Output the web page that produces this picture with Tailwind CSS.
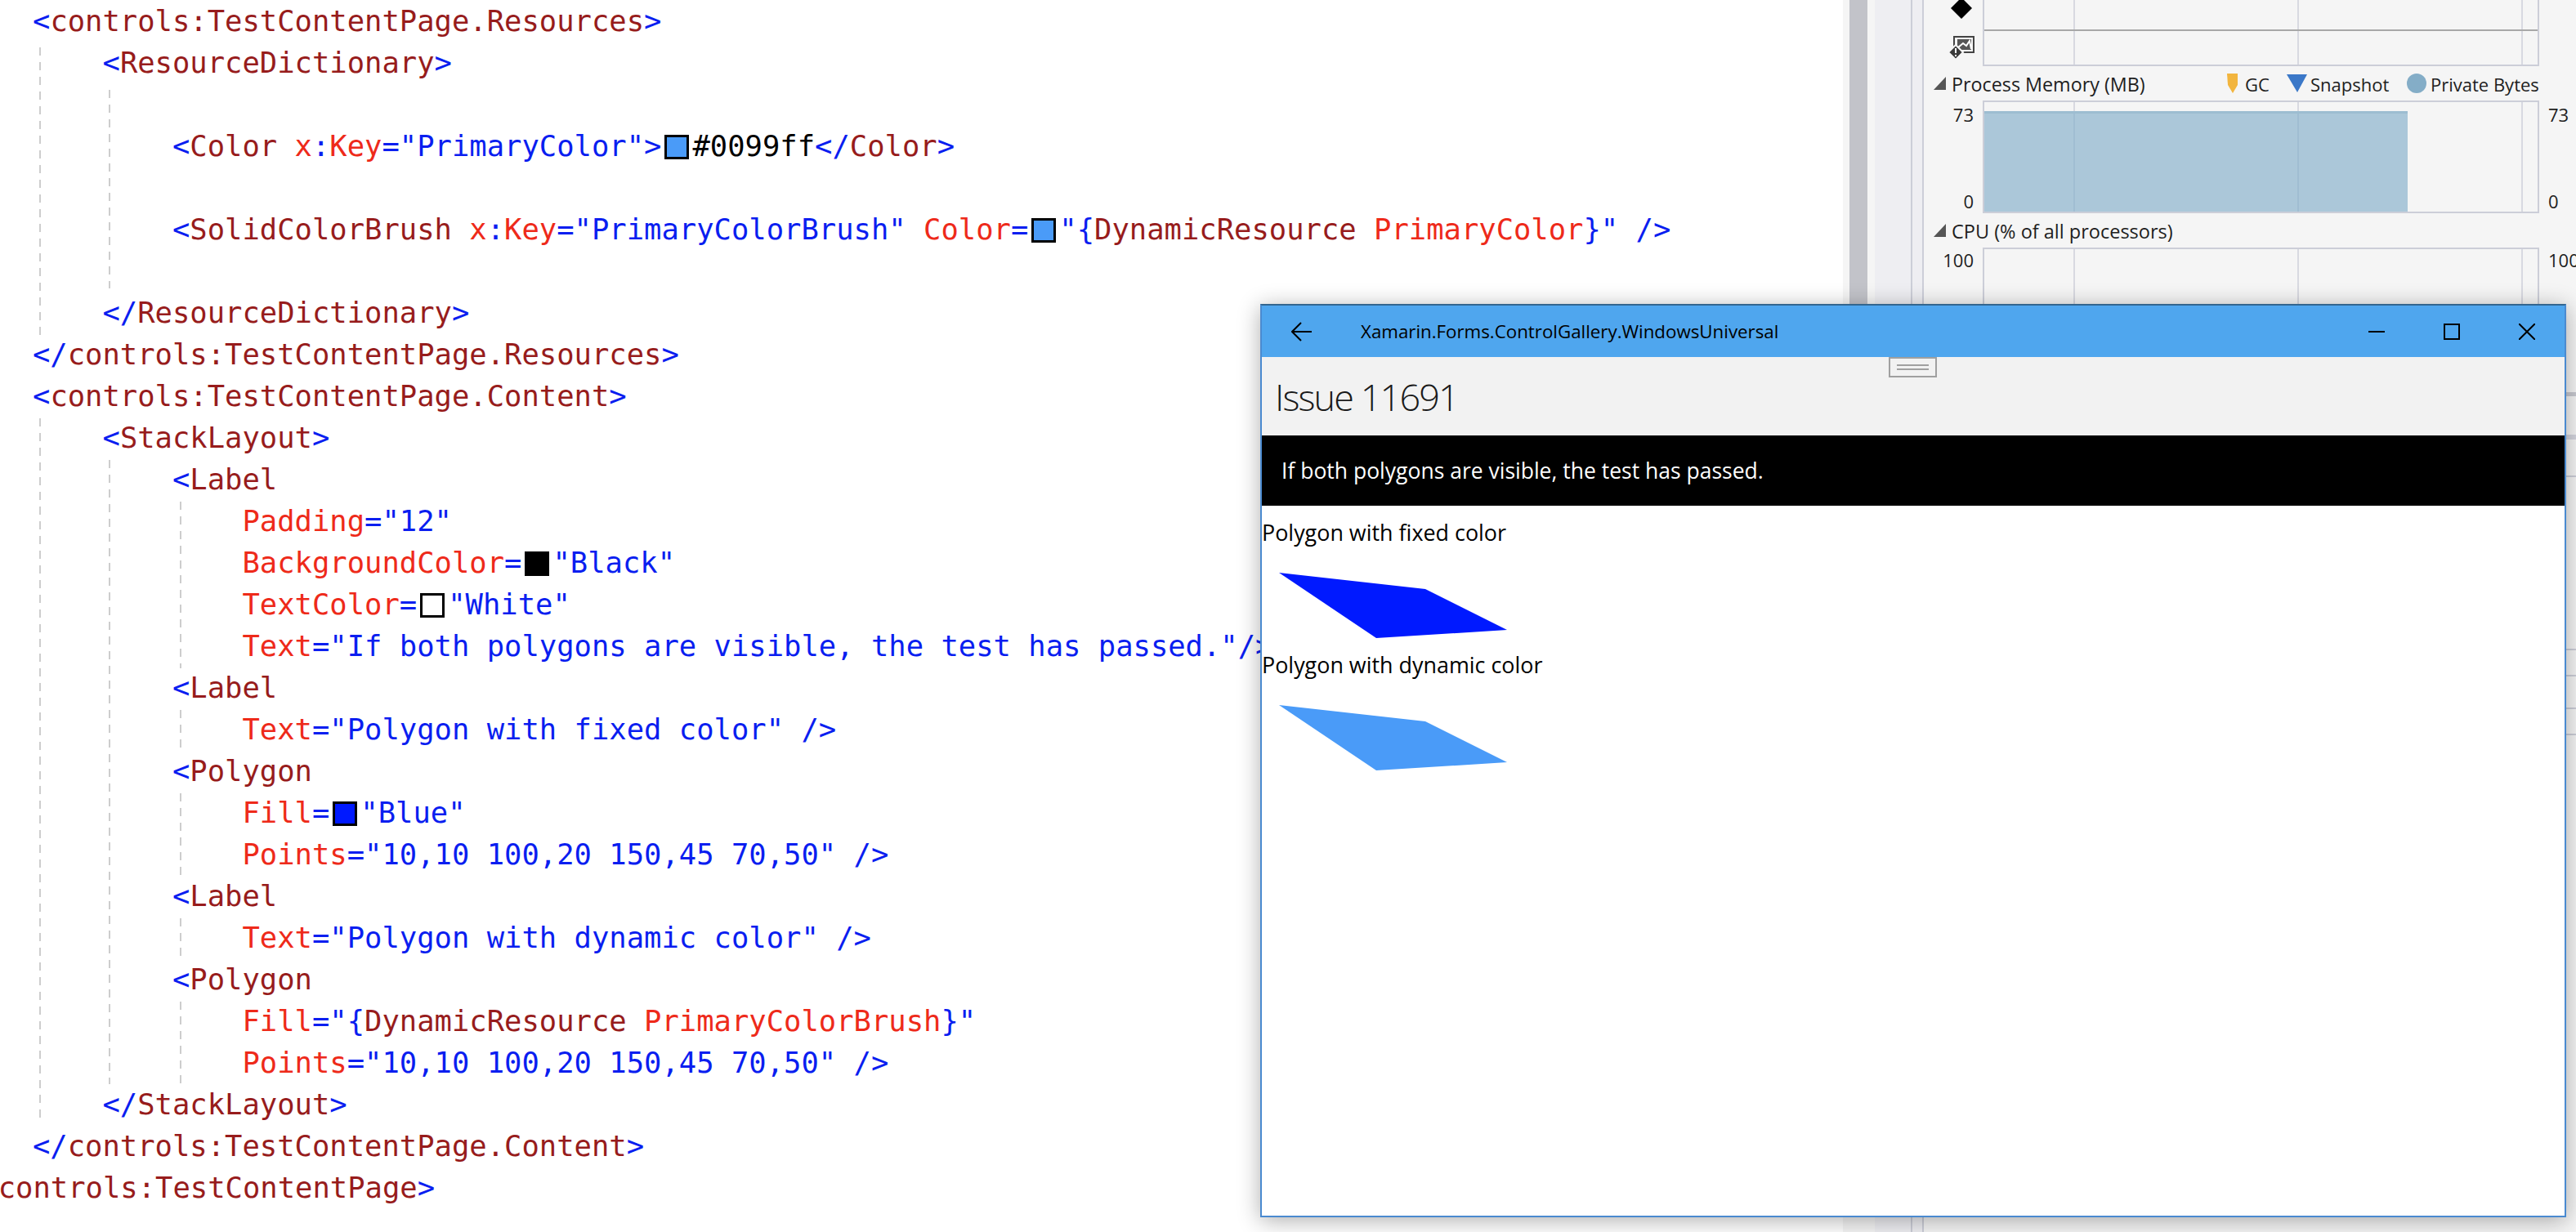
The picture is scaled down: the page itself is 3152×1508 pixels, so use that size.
<!DOCTYPE html>
<html>
<head>
<meta charset="utf-8">
<script src="https://cdn.jsdelivr.net/npm/@tailwindcss/browser@4"></script>
</head>
<body class="bg-white">
<div class="relative flex w-[3152px] h-[1508px] overflow-hidden bg-white font-['Open_Sans',sans-serif]">

  <!-- code editor -->
  <div class="relative w-[2255px] shrink-0 overflow-hidden pl-[40px] pt-0 font-['DejaVu_Sans_Mono',monospace] text-[35.5px] leading-[51px] [&>div]:whitespace-pre text-[#971c1c]">
    <div class="h-[51px]"><span class="text-[#0a1ef0]">&lt;</span>controls:TestContentPage.Resources<span class="text-[#0a1ef0]">&gt;</span></div>
    <div class="h-[51px]">    <span class="text-[#0a1ef0]">&lt;</span>ResourceDictionary<span class="text-[#0a1ef0]">&gt;</span></div>
    <div class="h-[51px]"></div>
    <div class="h-[51px]">        <span class="text-[#0a1ef0]">&lt;</span>Color <span class="text-[#ee2a1a]">x</span><span class="text-[#0a1ef0]">:</span><span class="text-[#ee2a1a]">Key</span><span class="text-[#0a1ef0]">="PrimaryColor"&gt;</span><span class="inline-block align-[-4px] w-[30px] h-[30px] ml-[4px] mr-[4px] border-[3px] border-black bg-[#4a9bf8]"></span><span class="text-black">#0099ff</span><span class="text-[#0a1ef0]">&lt;/</span>Color<span class="text-[#0a1ef0]">&gt;</span></div>
    <div class="h-[51px]"></div>
    <div class="h-[51px]">        <span class="text-[#0a1ef0]">&lt;</span>SolidColorBrush <span class="text-[#ee2a1a]">x</span><span class="text-[#0a1ef0]">:</span><span class="text-[#ee2a1a]">Key</span><span class="text-[#0a1ef0]">="PrimaryColorBrush"</span> <span class="text-[#ee2a1a]">Color</span><span class="text-[#0a1ef0]">=</span><span class="inline-block align-[-4px] w-[30px] h-[30px] ml-[4px] mr-[4px] border-[3px] border-black bg-[#4a9bf8]"></span><span class="text-[#0a1ef0]">"{</span>DynamicResource <span class="text-[#ee2a1a]">PrimaryColor</span><span class="text-[#0a1ef0]">}" /&gt;</span></div>
    <div class="h-[51px]"></div>
    <div class="h-[51px]">    <span class="text-[#0a1ef0]">&lt;/</span>ResourceDictionary<span class="text-[#0a1ef0]">&gt;</span></div>
    <div class="h-[51px]"><span class="text-[#0a1ef0]">&lt;/</span>controls:TestContentPage.Resources<span class="text-[#0a1ef0]">&gt;</span></div>
    <div class="h-[51px]"><span class="text-[#0a1ef0]">&lt;</span>controls:TestContentPage.Content<span class="text-[#0a1ef0]">&gt;</span></div>
    <div class="h-[51px]">    <span class="text-[#0a1ef0]">&lt;</span>StackLayout<span class="text-[#0a1ef0]">&gt;</span></div>
    <div class="h-[51px]">        <span class="text-[#0a1ef0]">&lt;</span>Label</div>
    <div class="h-[51px]">            <span class="text-[#ee2a1a]">Padding</span><span class="text-[#0a1ef0]">="12"</span></div>
    <div class="h-[51px]">            <span class="text-[#ee2a1a]">BackgroundColor</span><span class="text-[#0a1ef0]">=</span><span class="inline-block align-[-4px] w-[30px] h-[30px] ml-[4px] mr-[4px] border-[3px] border-black bg-black"></span><span class="text-[#0a1ef0]">"Black"</span></div>
    <div class="h-[51px]">            <span class="text-[#ee2a1a]">TextColor</span><span class="text-[#0a1ef0]">=</span><span class="inline-block align-[-4px] w-[30px] h-[30px] ml-[4px] mr-[4px] border-[3px] border-black bg-white"></span><span class="text-[#0a1ef0]">"White"</span></div>
    <div class="h-[51px]">            <span class="text-[#ee2a1a]">Text</span><span class="text-[#0a1ef0]">="If both polygons are visible, the test has passed."/&gt;</span></div>
    <div class="h-[51px]">        <span class="text-[#0a1ef0]">&lt;</span>Label</div>
    <div class="h-[51px]">            <span class="text-[#ee2a1a]">Text</span><span class="text-[#0a1ef0]">="Polygon with fixed color" /&gt;</span></div>
    <div class="h-[51px]">        <span class="text-[#0a1ef0]">&lt;</span>Polygon</div>
    <div class="h-[51px]">            <span class="text-[#ee2a1a]">Fill</span><span class="text-[#0a1ef0]">=</span><span class="inline-block align-[-4px] w-[30px] h-[30px] ml-[4px] mr-[4px] border-[3px] border-black bg-[#0019ff]"></span><span class="text-[#0a1ef0]">"Blue"</span></div>
    <div class="h-[51px]">            <span class="text-[#ee2a1a]">Points</span><span class="text-[#0a1ef0]">="10,10 100,20 150,45 70,50" /&gt;</span></div>
    <div class="h-[51px]">        <span class="text-[#0a1ef0]">&lt;</span>Label</div>
    <div class="h-[51px]">            <span class="text-[#ee2a1a]">Text</span><span class="text-[#0a1ef0]">="Polygon with dynamic color" /&gt;</span></div>
    <div class="h-[51px]">        <span class="text-[#0a1ef0]">&lt;</span>Polygon</div>
    <div class="h-[51px]">            <span class="text-[#ee2a1a]">Fill</span><span class="text-[#0a1ef0]">="{</span>DynamicResource <span class="text-[#ee2a1a]">PrimaryColorBrush</span><span class="text-[#0a1ef0]">}"</span></div>
    <div class="h-[51px]">            <span class="text-[#ee2a1a]">Points</span><span class="text-[#0a1ef0]">="10,10 100,20 150,45 70,50" /&gt;</span></div>
    <div class="h-[51px]">    <span class="text-[#0a1ef0]">&lt;/</span>StackLayout<span class="text-[#0a1ef0]">&gt;</span></div>
    <div class="h-[51px]"><span class="text-[#0a1ef0]">&lt;/</span>controls:TestContentPage.Content<span class="text-[#0a1ef0]">&gt;</span></div>
    <div class="h-[51px] -ml-[85px]"><span class="text-[#0a1ef0]">&lt;/</span>controls:TestContentPage<span class="text-[#0a1ef0]">&gt;</span></div>

    <!-- indent guides -->
    <div class="absolute left-[48px] top-[58px] w-[2px] h-[352px] bg-[repeating-linear-gradient(to_bottom,#cdcdcd_0_10px,transparent_10px_18px)]"></div>
    <div class="absolute left-[48px] top-[512px] w-[2px] h-[861px] bg-[repeating-linear-gradient(to_bottom,#cdcdcd_0_10px,transparent_10px_18px)]"></div>
    <div class="absolute left-[133px] top-[110px] w-[2px] h-[243px] bg-[repeating-linear-gradient(to_bottom,#cdcdcd_0_10px,transparent_10px_18px)]"></div>
    <div class="absolute left-[133px] top-[563px] w-[2px] h-[764px] bg-[repeating-linear-gradient(to_bottom,#cdcdcd_0_10px,transparent_10px_18px)]"></div>
    <div class="absolute left-[220px] top-[614px] w-[2px] h-[204px] bg-[repeating-linear-gradient(to_bottom,#cdcdcd_0_10px,transparent_10px_18px)]"></div>
    <div class="absolute left-[220px] top-[869px] w-[2px] h-[51px] bg-[repeating-linear-gradient(to_bottom,#cdcdcd_0_10px,transparent_10px_18px)]"></div>
    <div class="absolute left-[220px] top-[971px] w-[2px] h-[102px] bg-[repeating-linear-gradient(to_bottom,#cdcdcd_0_10px,transparent_10px_18px)]"></div>
    <div class="absolute left-[220px] top-[1124px] w-[2px] h-[51px] bg-[repeating-linear-gradient(to_bottom,#cdcdcd_0_10px,transparent_10px_18px)]"></div>
    <div class="absolute left-[220px] top-[1226px] w-[2px] h-[102px] bg-[repeating-linear-gradient(to_bottom,#cdcdcd_0_10px,transparent_10px_18px)]"></div>
  </div>

  <!-- scrollbar -->
  <div class="w-[39px] shrink-0 bg-[#f5f5f5] px-[8px]">
    <div class="w-[22px] h-[1200px] bg-[#c2c3c9]"></div>
  </div>

  <!-- strip between scrollbar and diagnostics -->
  <div class="w-[60px] shrink-0 flex bg-[#eeeef2]">
    <div class="ml-[44px] w-[2px] bg-[#ccced8]"></div>
    <div class="ml-[12px] w-[2px] bg-[#ccced8]"></div>
  </div>

  <!-- diagnostics panel -->
  <div class="relative flex-1 bg-[#f5f5f5] text-[22px] leading-[30px] text-[#1e1e1e] whitespace-nowrap">
    <div class="flex h-[81px]">
      <div class="relative w-[72px] shrink-0">
        <svg class="absolute left-[33px] top-0" width="26" height="24" viewBox="0 0 26 24"><path d="M13 -3 26 10 13 23 0 10Z" fill="#000"/></svg>
        <svg class="absolute left-[28px] top-[42px]" width="36" height="34" viewBox="0 0 36 34">
          <path d="M9 3H33V22H9Z" fill="#f5f5f5" stroke="#444" stroke-width="2"/>
          <path d="M13 6H30V19H13Z" fill="#555"/>
          <path d="M14 16 20 11 24 14 28 8 30 18" fill="none" stroke="#fff" stroke-width="2"/>
          <path d="M11 13 20 22 11 31 2 22Z" fill="#3a3a3a" stroke="#f5f5f5" stroke-width="2"/>
          <path d="M11 17V23M11 25V27" stroke="#fff" stroke-width="2"/>
        </svg>
      </div>
      <div class="relative w-[681px] border-x-2 border-b-2 border-[#ccced8]">
        <div class="absolute inset-y-0 left-[109px] w-[2px] bg-[#d8d9e1]"></div>
        <div class="absolute inset-y-0 left-[383px] w-[2px] bg-[#d8d9e1]"></div>
        <div class="absolute inset-y-0 left-[657px] w-[2px] bg-[#d8d9e1]"></div>
        <div class="absolute inset-x-0 top-[36px] h-[2px] bg-[#a8a8a8]"></div>
      </div>
    </div>

    <div class="flex items-center h-[42px] pl-[12px] pr-[44px]">
      <svg class="w-[15px] h-[16px] mr-[7px]" viewBox="0 0 15 16"><path d="M15 0V16H0Z" fill="#555"/></svg>
      <span class="w-[337px] text-[23.3px] pt-[2px]">Process Memory (MB)</span>
      <svg class="w-[13px] h-[24px] mr-[9px]" viewBox="0 0 13 24"><path d="M0 0H13V14L7 24 1 14Z" fill="#f2b53e"/></svg>
      <span class="w-[51px] pt-[2px]">GC</span>
      <svg class="w-[25px] h-[22px] mr-[4px]" viewBox="0 0 25 22"><path d="M0 0H25L13 22Z" fill="#3b78c8"/></svg>
      <span class="w-[118px] pt-[2px]">Snapshot</span>
      <span class="w-[24px] h-[24px] rounded-full bg-[#84adc7] mr-[5px]"></span>
      <span class="pt-[2px]">Private Bytes</span>
    </div>

    <div class="flex h-[138px]">
      <div class="w-[72px] shrink-0 pr-[11px] flex flex-col items-end justify-between pt-[2px]">
        <span>73</span><span>0</span>
      </div>
      <div class="relative w-[681px] border-2 border-[#ccced8]">
        <div class="absolute inset-y-0 left-[109px] w-[2px] bg-[#d8d9e1]"></div>
        <div class="absolute inset-y-0 left-[383px] w-[2px] bg-[#d8d9e1]"></div>
        <div class="absolute inset-y-0 left-[657px] w-[2px] bg-[#d8d9e1]"></div>
        <div class="absolute left-0 top-[11px] bottom-0 w-[518px] border-t-[3px] border-[#9dbdd1] bg-[#83adca]/65"></div>
      </div>
      <div class="pl-[11px] flex flex-col justify-between pt-[2px]">
        <span>73</span><span>0</span>
      </div>
    </div>

    <div class="flex items-center h-[42px] pl-[12px]">
      <svg class="w-[15px] h-[16px] mr-[7px]" viewBox="0 0 15 16"><path d="M15 0V16H0Z" fill="#555"/></svg>
      <span class="text-[23.5px] pt-[2px]">CPU (% of all processors)</span>
    </div>

    <div class="flex h-[177px]">
      <div class="w-[72px] shrink-0 pr-[11px] flex justify-end"><span>100</span></div>
      <div class="relative w-[681px] border-2 border-[#ccced8]">
        <div class="absolute inset-y-0 left-[109px] w-[2px] bg-[#d8d9e1]"></div>
        <div class="absolute inset-y-0 left-[383px] w-[2px] bg-[#d8d9e1]"></div>
        <div class="absolute inset-y-0 left-[657px] w-[2px] bg-[#d8d9e1]"></div>
      </div>
      <div class="pl-[11px]"><span>100</span></div>
    </div>

    <!-- fragments of lines left visible to the right of the floating window -->
    <div class="absolute right-0 top-[480px] w-[45px] h-[5px] bg-[#c8c9d0]"></div>
    <div class="absolute right-0 top-[532px] w-[45px] h-[6px] bg-[#d4d5de]"></div>
    <div class="absolute right-0 top-[582px] w-[45px] h-[2px] bg-[#ccced8]"></div>
    <div class="absolute right-0 top-[794px] w-[45px] h-[2px] bg-[#ccced8]"></div>
    <div class="absolute right-0 top-[826px] w-[45px] h-[2px] bg-[#ccced8]"></div>
    <div class="absolute right-0 top-[866px] w-[45px] h-[2px] bg-[#ccced8]"></div>
    <div class="absolute right-0 top-[898px] w-[45px] h-[2px] bg-[#ccced8]"></div>
  </div>

  <!-- floating app window -->
  <div class="absolute left-[1542px] top-[372px] w-[1598px] h-[1118px] flex flex-col bg-white border-2 border-[#4a8ad0] border-t-[#33668f] shadow-[0_4px_26px_rgba(0,0,0,0.32)] font-['Open_Sans',sans-serif]">
    <div class="flex items-center h-[63px] shrink-0 bg-[#4fa6ee] text-black">
      <svg class="ml-[36px] w-[26px] h-[24px]" viewBox="0 0 26 24"><path d="M25 12H2M12 1 1 12 12 23" fill="none" stroke="#000" stroke-width="2"/></svg>
      <span class="ml-[59px] flex-1 text-[22.3px] leading-[30px]">Xamarin.Forms.ControlGallery.WindowsUniversal</span>
      <svg class="w-[20px] h-[20px]" viewBox="0 0 20 20"><path d="M0 10H20" stroke="#000" stroke-width="2"/></svg>
      <svg class="ml-[72px] w-[20px] h-[20px]" viewBox="0 0 20 20"><path d="M1 1H19V19H1Z" fill="none" stroke="#000" stroke-width="2"/></svg>
      <svg class="ml-[72px] mr-[36px] w-[20px] h-[20px]" viewBox="0 0 20 20"><path d="M0 0 20 20M20 0 0 20" fill="none" stroke="#000" stroke-width="2"/></svg>
    </div>
    <div class="relative flex items-center h-[96px] shrink-0 bg-[#f2f2f2] pl-[16px] pt-[2px] text-[45px] tracking-[-1.9px] font-light text-[#1a1a1a]">
      Issue 11691
      <div class="absolute left-[767px] top-0 w-[59px] h-[25px] border-2 border-[#a0a0a0] flex flex-col items-center justify-center gap-[3px] tracking-normal">
        <div class="w-[39px] h-[2px] bg-[#a0a0a0]"></div>
        <div class="w-[39px] h-[2px] bg-[#a0a0a0]"></div>
      </div>
    </div>
    <div class="flex items-center h-[86px] shrink-0 bg-black pl-[24px] pt-[2px] text-white text-[26.5px]">If both polygons are visible, the test has passed.</div>
    <div class="mt-[3px] flex items-center h-[62px] pb-[2px] text-[26.9px] text-black">Polygon with fixed color</div>
    <svg class="block w-[400px] h-[100px]" viewBox="0 0 400 100"><polygon points="21,17 200,37 300,87 140,97" fill="#0019ff"/></svg>
    <div class="flex items-center h-[62px] pb-[2px] text-[26.9px] text-black">Polygon with dynamic color</div>
    <svg class="block w-[400px] h-[100px]" viewBox="0 0 400 100"><polygon points="21,17 200,37 300,87 140,97" fill="#4a9bf8"/></svg>
  </div>
</div>
</body>
</html>
